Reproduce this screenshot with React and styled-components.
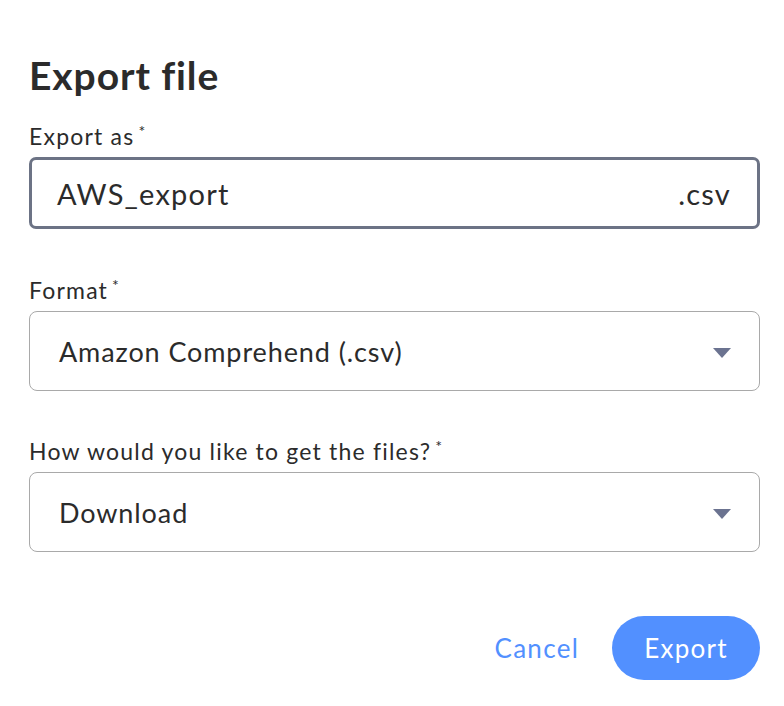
import React from 'react';
import styled, { createGlobalStyle } from 'styled-components';

const GlobalStyle = createGlobalStyle`
  html, body {
    margin: 0;
    padding: 0;
    background: #ffffff;
  }
  body {
    font-family: Lato, "Noto Sans", "Liberation Sans", sans-serif;
    color: #2b2b2b;
  }
`

const Dialog = styled.div`
  width: 784px;
  height: 706px;
  box-sizing: border-box;
  padding: 50px 24px 0 29px;
  display: flex;
  flex-direction: column;
`

const Title = styled.h1`
  margin: 0 0 24px;
  font-size: 39px;
  line-height: 50px;
  font-weight: 700;
  color: #2b2b2b;
  letter-spacing: 0.9px;
`

const Field = styled.div`
  display: flex;
  flex-direction: column;
  margin-bottom: ${props => props.gap || 0}px;
`

const Label = styled.label`
  font-size: 23px;
  line-height: 24px;
  letter-spacing: 1.2px;
  color: #2b2b2b;
  margin-bottom: 9px;

  &::after {
    content: '*';
    font-size: 16px;
    vertical-align: top;
    margin-left: 4px;
    line-height: 14px;
  }
`

const InputBox = styled.div`
  height: 72px;
  box-sizing: border-box;
  border: 3px solid #6c7385;
  border-radius: 7px;
  display: flex;
  align-items: center;
  padding: 0 26px 0 25px;
  font-size: 29px;
  letter-spacing: 1.2px;
  color: #2b2b2b;
`

const InputText = styled.span`
  flex: 1;
`

const Suffix = styled.span``

const SelectBox = styled.div`
  height: 80px;
  box-sizing: border-box;
  border: 1px solid #a9a9a9;
  border-radius: 8px;
  display: flex;
  align-items: center;
  padding: 0 28px 0 29px;
  font-size: 27px;
  letter-spacing: 0.9px;
  color: #2b2b2b;
`

const SelectValue = styled.span`
  flex: 1;
`

const Caret = styled.svg`
  width: 18px;
  height: 10px;
  margin-top: 4px;
  fill: #6b7390;
`

const Actions = styled.div`
  display: flex;
  justify-content: flex-end;
  align-items: center;
  gap: 33px;
`

const TextButton = styled.button`
  border: none;
  background: none;
  padding: 0;
  font-family: inherit;
  font-size: 26px;
  letter-spacing: 1.3px;
  color: #5290ff;
  cursor: pointer;
`

const PrimaryButton = styled.button`
  border: none;
  height: 64px;
  padding: 0 32px;
  border-radius: 32px;
  background: #5290ff;
  color: #ffffff;
  font-family: inherit;
  font-size: 26px;
  letter-spacing: 1.3px;
  cursor: pointer;
`

function Select({ value }) {
  return (
    <SelectBox>
      <SelectValue>{value}</SelectValue>
      <Caret viewBox="0 0 18 10">
        <path d="M0 0h18L9 10z" />
      </Caret>
    </SelectBox>
  )
}

export default function App() {
  return (
    <>
      <GlobalStyle />
      <Dialog>
        <Title>Export file</Title>
        <Field gap={49}>
          <Label>Export as</Label>
          <InputBox>
            <InputText>AWS_export</InputText>
            <Suffix>.csv</Suffix>
          </InputBox>
        </Field>
        <Field gap={48}>
          <Label>Format</Label>
          <Select value="Amazon Comprehend (.csv)" />
        </Field>
        <Field gap={64}>
          <Label>How would you like to get the files?</Label>
          <Select value="Download" />
        </Field>
        <Actions>
          <TextButton>Cancel</TextButton>
          <PrimaryButton>Export</PrimaryButton>
        </Actions>
      </Dialog>
    </>
  )
}
